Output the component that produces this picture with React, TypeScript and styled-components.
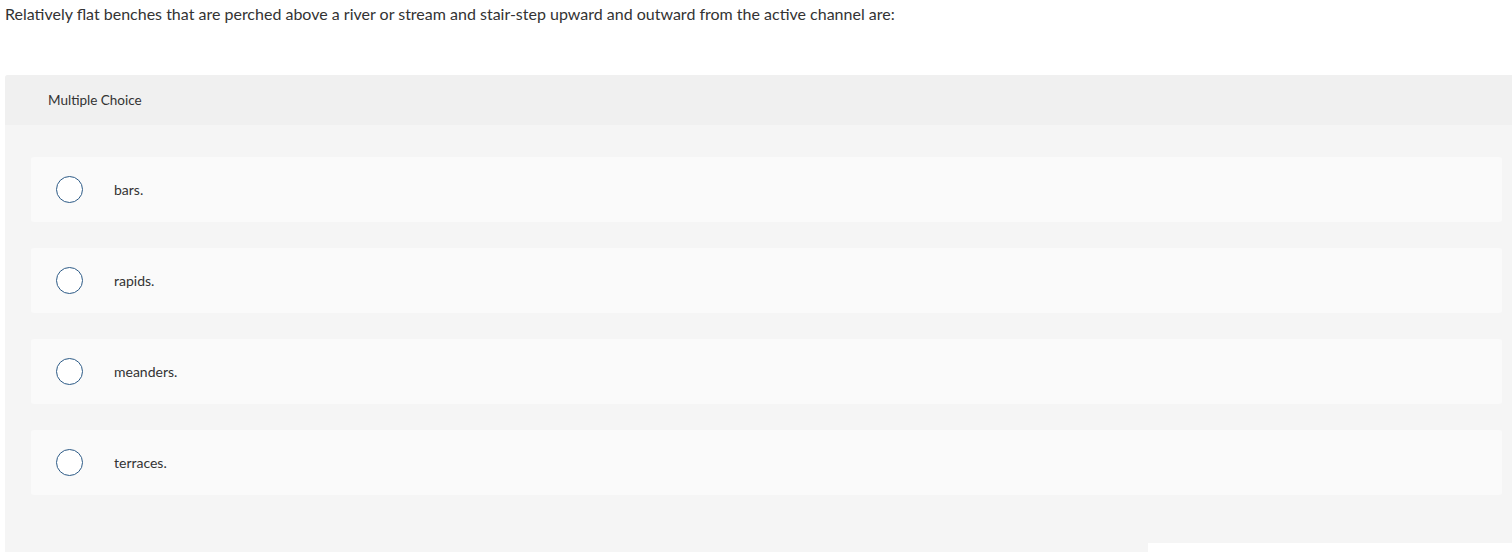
import React from "react";
import styled, { createGlobalStyle } from "styled-components";

const Global = createGlobalStyle`
  html, body { margin: 0; padding: 0; background: #ffffff; overflow: hidden; }
  body { font-family: Lato, "Open Sans", "Liberation Sans", sans-serif; color: #333333; }
`;

const Page = styled.div`
  position: relative;
  height: 552px;
  overflow: hidden;
  padding-left: 5px;
`;

const Question = styled.p`
  margin: 0;
  padding: 4px 0 0 0;
  height: 75px;
  box-sizing: border-box;
  font-size: 16px;
  line-height: 20px;
  color: #333333;
`;

const Panel = styled.section`
  background: #f5f5f5;
  border-radius: 3px 0 0 0;
  min-height: 480px;
`;

const PanelHeader = styled.header`
  background: #f0f0f0;
  height: 50px;
  display: flex;
  align-items: center;
  padding-left: 43px;
  font-size: 13.5px;
  color: #333333;
  border-radius: 3px 0 0 0;
`;

const Options = styled.div`
  display: flex;
  flex-direction: column;
  gap: 26px;
  padding: 32px 10px 0 26px;
`;

const Option = styled.label`
  display: flex;
  align-items: center;
  height: 65px;
  background: #fafafa;
  border-radius: 3px;
  padding-left: 25px;
  cursor: pointer;
`;

const Radio = styled.span`
  width: 25px;
  height: 25px;
  border: 1.5px solid #2c5a86;
  border-radius: 50%;
  background: #ffffff;
  flex: none;
`;

const OptionText = styled.span`
  margin-left: 31px;
  font-size: 14px;
  color: #333333;
`;

const FooterCover = styled.div`
  position: absolute;
  left: 1148px;
  right: 0;
  top: 543px;
  bottom: 0;
  background: #ffffff;
`;

const choices = ["bars.", "rapids.", "meanders.", "terraces."];

export default function App() {
  return (
    <>
      <Global />
      <Page>
        <Question>
          Relatively flat benches that are perched above a river or stream and stair-step upward and outward from the active channel are:
        </Question>
        <Panel>
          <PanelHeader>Multiple Choice</PanelHeader>
          <Options>
            {choices.map((c) => (
              <Option key={c}>
                <Radio />
                <OptionText>{c}</OptionText>
              </Option>
            ))}
          </Options>
        </Panel>
        <FooterCover />
      </Page>
    </>
  );
}
